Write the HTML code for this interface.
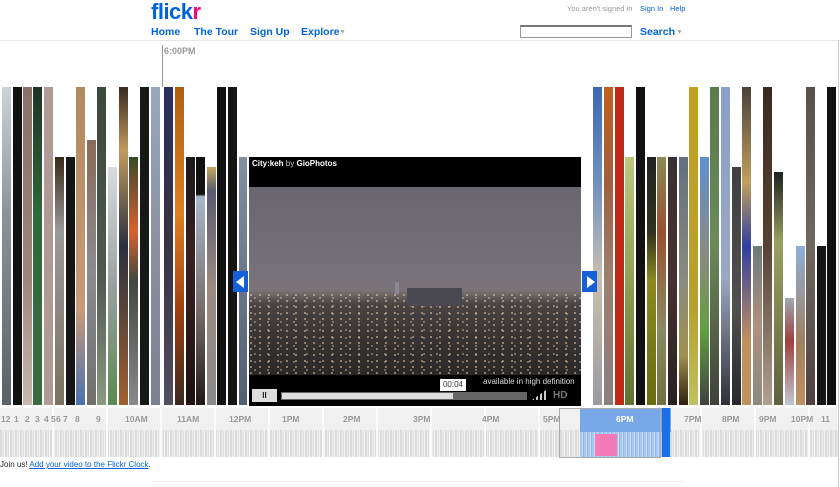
<!DOCTYPE html>
<html><head><meta charset="utf-8"><style>
*{margin:0;padding:0;box-sizing:border-box}
body{width:840px;height:487px;overflow:hidden;background:#fff;font-family:"Liberation Sans",Arial,sans-serif;position:relative}
.a{position:absolute}
.nav{position:absolute;top:26px;font-size:10.5px;font-weight:bold;color:#0063dc}
.s{position:absolute;bottom:82px;width:9px}
.lbl{position:absolute;top:414px;font-size:8.5px;color:#999;font-weight:bold}
</style></head><body>
<div class="a" style="left:151px;top:-1px;font-size:22px;font-weight:bold;color:#0063dc;letter-spacing:-0.5px">flick<span style="color:#ff0084">r</span></div>
<div class="a" style="left:567px;top:4px;font-size:7.5px;color:#999">You aren't signed in</div>
<div class="a" style="left:640px;top:4px;font-size:7.5px;color:#0063dc">Sign In</div>
<div class="a" style="left:670px;top:4px;font-size:7.5px;color:#0063dc">Help</div>
<div class="nav" style="left:151px">Home</div>
<div class="nav" style="left:194px">The Tour</div>
<div class="nav" style="left:250px">Sign Up</div>
<div class="nav" style="left:301px">Explore</div>
<div class="a" style="left:339px;top:29px;font-size:7px;color:#aaa">▼</div>
<div class="a" style="left:520px;top:25px;width:112px;height:13px;border:1px solid #999;border-top:2px solid #777"></div>
<div class="nav" style="left:640px">Search</div>
<div class="a" style="left:676px;top:29px;font-size:7px;color:#aaa">▼</div>
<div class="a" style="left:0;top:40px;width:840px;height:1px;background:#e8e8e8"></div>
<div class="a" style="left:838px;top:40px;width:1px;height:447px;background:#ccc"></div>
<div class="a" style="left:162px;top:45px;width:1px;height:42px;background:#999"></div>
<div class="a" style="left:164px;top:46px;font-size:9px;font-weight:bold;color:#999">6:00PM</div>

<!-- left strips -->
<div class="s" style="left:2px;top:87px;background:linear-gradient(#ccd4d8,#8a9498 40%,#5a6268)"></div>
<div class="s" style="left:13px;top:87px;background:#111"></div>
<div class="s" style="left:23px;top:87px;background:linear-gradient(#8a7068,#a0847a 60%,#c8b8b0)"></div>
<div class="s" style="left:33px;top:87px;background:linear-gradient(#1e3424,#2e6a3a 40%,#3a6a40)"></div>
<div class="s" style="left:44px;top:87px;background:#b09a94"></div>
<div class="s" style="left:55px;top:157px;background:linear-gradient(#3a2a18,#9a9a9a 30%,#7a7060)"></div>
<div class="s" style="left:66px;top:157px;background:#151515"></div>
<div class="s" style="left:76px;top:87px;background:linear-gradient(#b08a60,#c89a78 70%,#4a70b0)"></div>
<div class="s" style="left:87px;top:140px;background:linear-gradient(#8a6a58,#8a8a90 50%,#707070)"></div>
<div class="s" style="left:97px;top:87px;background:linear-gradient(#3a4a3a,#505850 60%,#8a9a80)"></div>
<div class="s" style="left:108px;top:167px;background:linear-gradient(#d8dce0,#9aa0a0 50%,#5a8a50)"></div>
<div class="s" style="left:119px;top:87px;background:linear-gradient(#3a2a20,#c09a60 20%,#2a3040 50%,#a06030)"></div>
<div class="s" style="left:129px;top:157px;background:linear-gradient(#3a4a2a,#d86030 30%,#404840 50%,#8a8a8a)"></div>
<div class="s" style="left:140px;top:87px;background:#181818"></div>
<div class="s" style="left:151px;top:87px;background:linear-gradient(#98a8c0,#8a90a0 50%,#7a8090)"></div>
<div class="s" style="left:164px;top:87px;background:linear-gradient(#2a3060,#3a3040 50%,#505060)"></div>
<div class="s" style="left:175px;top:87px;background:linear-gradient(#b06010,#e08020 40%,#a04010 70%,#3a2a20)"></div>
<div class="s" style="left:186px;top:157px;background:linear-gradient(#1a1a1a,#3a2020 40%,#201010)"></div>
<div class="s" style="left:196px;top:157px;background:linear-gradient(#111 0,#111 15%,#a8b8c8 16%,#7a7070 60%,#201818)"></div>
<div class="s" style="left:207px;top:167px;background:linear-gradient(#c0a860,#5a5a70 10%,#9a8a80 50%,#8a8a8a)"></div>
<div class="s" style="left:217px;top:87px;background:#111"></div>
<div class="s" style="left:228px;top:87px;background:#141414"></div>
<div class="s" style="left:239px;top:157px;background:linear-gradient(#8090a0,#506070)"></div>

<!-- right strips -->
<div class="s" style="left:593px;top:87px;background:linear-gradient(#3a68b0,#7090c0 30%,#c8c0b0 60%,#9a9aa0)"></div>
<div class="s" style="left:604px;top:87px;background:linear-gradient(#c06020,#a06040 30%,#9a8070 60%,#8a8080)"></div>
<div class="s" style="left:615px;top:87px;background:#c02818"></div>
<div class="s" style="left:625px;top:157px;background:linear-gradient(#c0c880,#90a050 50%,#607030)"></div>
<div class="s" style="left:636px;top:87px;background:#111"></div>
<div class="s" style="left:647px;top:157px;background:linear-gradient(#222,#303020 30%,#8a8a20 50%,#6a6a10)"></div>
<div class="s" style="left:657px;top:157px;background:linear-gradient(#8a8a50,#9a5030 30%,#8a8a60 70%,#707040)"></div>
<div class="s" style="left:668px;top:157px;background:linear-gradient(#3a3030,#4a3030 50%,#2a2020)"></div>
<div class="s" style="left:679px;top:157px;background:linear-gradient(#607080,#8a8a80 50%,#a09050 80%,#302010)"></div>
<div class="s" style="left:689px;top:87px;background:linear-gradient(#c0a020,#b8a030 70%,#c0c060)"></div>
<div class="s" style="left:700px;top:157px;background:linear-gradient(#6090d0,#8a8a80 40%,#60a040 70%,#404040)"></div>
<div class="s" style="left:710px;top:87px;background:linear-gradient(#5a7a50,#6a8a5a 50%,#404038)"></div>
<div class="s" style="left:721px;top:87px;background:linear-gradient(#8aa0c8,#9aa8c0 60%,#303038)"></div>
<div class="s" style="left:732px;top:167px;background:linear-gradient(#404040,#505050 60%,#282828)"></div>
<div class="s" style="left:742px;top:87px;background:linear-gradient(#4a4038,#c0a060 30%,#3040a0 50%,#c09060 80%)"></div>
<div class="s" style="left:753px;top:246px;background:linear-gradient(#6a7a7a,#b09080 50%,#8a8a80)"></div>
<div class="s" style="left:763px;top:87px;background:linear-gradient(#3a2a20,#5a4030 50%,#b0a090)"></div>
<div class="s" style="left:774px;top:172px;background:linear-gradient(#202020,#9aa060 30%,#606040)"></div>
<div class="s" style="left:785px;top:298px;background:linear-gradient(#a0a8b0,#a04040 40%,#c0c8d0)"></div>
<div class="s" style="left:796px;top:246px;background:linear-gradient(#90b0d8,#a08060 60%,#c09060)"></div>
<div class="s" style="left:806px;top:87px;background:linear-gradient(#5a5048,#706860 50%,#504040)"></div>
<div class="s" style="left:817px;top:246px;background:#161616"></div>
<div class="s" style="left:827px;top:87px;background:#111"></div>

<!-- video -->
<div class="a" style="left:247px;top:156px;width:336px;height:251px;background:#fff"></div>
<div class="a" style="left:249px;top:157px;width:332px;height:249px;background:#000"></div>
<div class="a" style="left:252px;top:159px;font-size:8px;color:#fff;font-weight:bold">City:keh <span style="font-weight:normal;color:#ccc">by</span> GioPhotos</div>
<div class="a" style="left:249px;top:187px;width:332px;height:188px;background:linear-gradient(#6a6670 0%,#74707a 40%,#7a7478 55%,#6e6868 57%,#4a4444 62%,#383434 80%,#2a2828 100%)"></div>
<div class="a" style="left:249px;top:293px;width:332px;height:82px;background:radial-gradient(circle at 2px 2px,rgba(255,220,170,.5) 0 1px,transparent 1.2px) 0 0/9px 6px,radial-gradient(circle at 2px 2px,rgba(255,240,210,.35) 0 1px,transparent 1.2px) 4px 3px/13px 8px"></div>
<div class="a" style="left:407px;top:288px;width:55px;height:18px;background:#4a4850"></div>
<div class="a" style="left:395px;top:282px;width:4px;height:12px;background:#8a8890"></div>
<div class="a" style="left:483px;top:377px;font-size:8px;color:#ddd">available in high definition</div>
<div class="a" style="left:252px;top:389px;width:25px;height:13px;background:#ddd;font-size:8px;font-weight:bold;text-align:center;line-height:13px;color:#222">II</div>
<div class="a" style="left:281px;top:392px;width:246px;height:8px;background:#666"></div>
<div class="a" style="left:282px;top:393px;width:171px;height:6px;background:#ddd"></div>
<div class="a" style="left:440px;top:379px;width:26px;height:12px;background:#fff;font-size:8px;text-align:center;line-height:12px;color:#333">00:04</div>
<div class="a" style="left:532px;top:390px;width:14px;height:10px;background:linear-gradient(90deg,#ccc 0 2px,transparent 2px 4px,#ccc 4px 6px,transparent 6px 8px,#ccc 8px 10px,transparent 10px 12px,#ccc 12px 14px);clip-path:polygon(0 100%,100% 0,100% 100%)"></div>
<div class="a" style="left:553px;top:390px;font-size:10px;color:#777;font-weight:bold">HD</div>
<div class="a" style="left:233px;top:271px;width:15px;height:21px;background:#1560d8"></div>
<div class="a" style="left:236px;top:276px;width:0;height:0;border-top:6px solid transparent;border-bottom:6px solid transparent;border-right:8px solid #fff"></div>
<div class="a" style="left:582px;top:271px;width:15px;height:21px;background:#1560d8"></div>
<div class="a" style="left:587px;top:276px;width:0;height:0;border-top:6px solid transparent;border-bottom:6px solid transparent;border-left:8px solid #fff"></div>

<!-- timeline -->
<div class="a" style="left:0;top:408px;width:838px;height:49px;background:#f0f0f0"></div>
<div class="a" style="left:0;top:430px;width:838px;height:27px;background:repeating-linear-gradient(90deg,#dcdcdc 0 2px,#ececec 2px 3px,#e0e0e0 3px 4px,#f2f2f2 4px 5px)"></div>
<div class="a" style="left:0;top:408px;width:838px;height:49px;background:repeating-linear-gradient(90deg,transparent 0 52px,#fafafa 52px 54px)"></div>
<div class="a" style="left:580px;top:408px;width:91px;height:49px;background:#78a8e8"></div>
<div class="a" style="left:580px;top:432px;width:91px;height:25px;background:repeating-linear-gradient(90deg,#a8c8f0 0 2px,#c8dcf8 2px 3px,#90b8ec 3px 4px)"></div>
<div class="a" style="left:662px;top:408px;width:8px;height:49px;background:#1a6ee8"></div>
<div class="a" style="left:595px;top:434px;width:22px;height:22px;background:#f77ab8"></div>
<div class="a" style="left:559px;top:408px;width:102px;height:50px;border:1px solid #aaa"></div>
<div class="lbl" style="left:1px">12</div><div class="lbl" style="left:14px">1</div><div class="lbl" style="left:25px">2</div><div class="lbl" style="left:35px">3</div><div class="lbl" style="left:44px">4</div><div class="lbl" style="left:51px">5</div><div class="lbl" style="left:56px">6</div><div class="lbl" style="left:63px">7</div><div class="lbl" style="left:75px">8</div><div class="lbl" style="left:96px">9</div>
<div class="lbl" style="left:125px">10AM</div><div class="lbl" style="left:177px">11AM</div><div class="lbl" style="left:229px">12PM</div><div class="lbl" style="left:282px">1PM</div><div class="lbl" style="left:343px">2PM</div><div class="lbl" style="left:413px">3PM</div><div class="lbl" style="left:482px">4PM</div><div class="lbl" style="left:543px">5PM</div>
<div class="lbl" style="left:616px;color:#fff">6PM</div><div class="lbl" style="left:684px">7PM</div><div class="lbl" style="left:722px">8PM</div><div class="lbl" style="left:759px">9PM</div><div class="lbl" style="left:791px">10PM</div><div class="lbl" style="left:821px">11</div>

<div class="a" style="left:0;top:460px;font-size:8px;color:#222">Join us! <span style="color:#0063dc;text-decoration:underline">Add your video to the Flickr Clock</span>.</div>
<div class="a" style="left:152px;top:481px;width:533px;height:1px;background:#eee"></div>
</body></html>
